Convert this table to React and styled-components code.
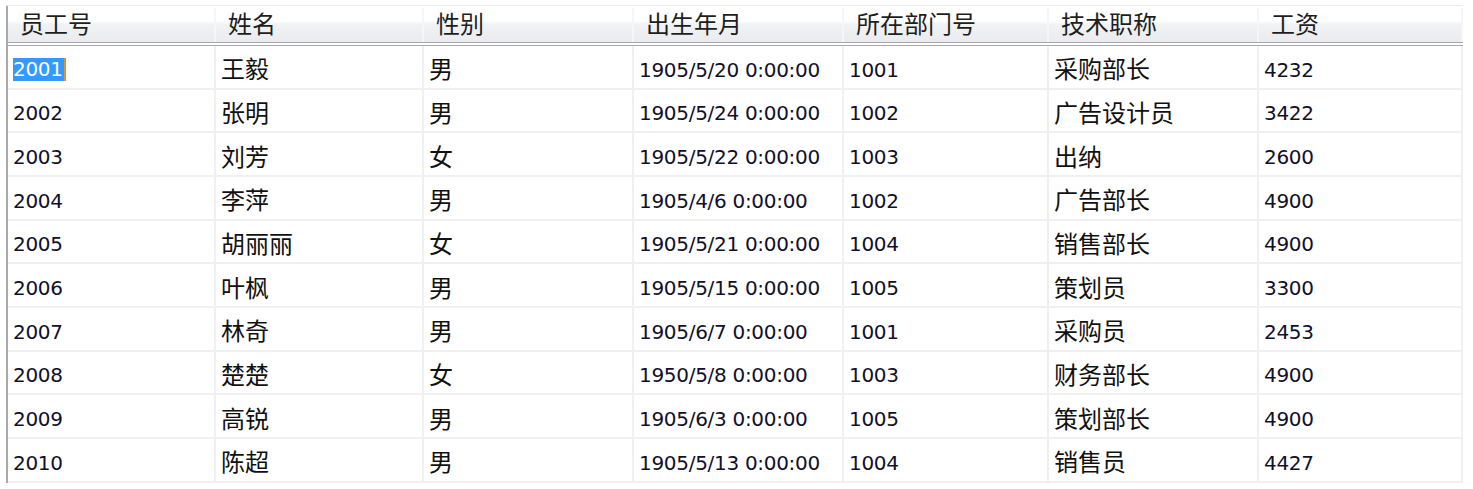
import styled, { createGlobalStyle } from "styled-components"

const GlobalStyle = createGlobalStyle`
    body {
        margin: 0;
        background: #ffffff;
    }
`

// column widths measured from the grid lines
const widths = [208, 208, 210, 210, 205, 210, 204]

const columns = ["员工号", "姓名", "性别", "出生年月", "所在部门号", "技术职称", "工资"]

const rows = [
    ["2001", "王毅", "男", "1905/5/20 0:00:00", "1001", "采购部长", "4232"],
    ["2002", "张明", "男", "1905/5/24 0:00:00", "1002", "广告设计员", "3422"],
    ["2003", "刘芳", "女", "1905/5/22 0:00:00", "1003", "出纳", "2600"],
    ["2004", "李萍", "男", "1905/4/6 0:00:00", "1002", "广告部长", "4900"],
    ["2005", "胡丽丽", "女", "1905/5/21 0:00:00", "1004", "销售部长", "4900"],
    ["2006", "叶枫", "男", "1905/5/15 0:00:00", "1005", "策划员", "3300"],
    ["2007", "林奇", "男", "1905/6/7 0:00:00", "1001", "采购员", "2453"],
    ["2008", "楚楚", "女", "1950/5/8 0:00:00", "1003", "财务部长", "4900"],
    ["2009", "高锐", "男", "1905/6/3 0:00:00", "1005", "策划部长", "4900"],
    ["2010", "陈超", "男", "1905/5/13 0:00:00", "1004", "销售员", "4427"],
]

// digits and dates use a Tahoma-like face, Chinese text a CJK face
const isCjk = (text) => /[\u4e00-\u9fff]/.test(text)

const App = () => {
    return (
        <Page>
            <GlobalStyle />
            <Grid>
                <HeaderRow>
                    {columns.map((name, i) => (
                        <HeaderCell key={name} $width={widths[i]}>{name}</HeaderCell>
                    ))}
                </HeaderRow>
                {rows.map((row, r) => (
                    <Row key={row[0]}>
                        {row.map((value, c) => (
                            <Cell key={c} $width={widths[c]} $cjk={isCjk(value)}>
                                {r === 0 && c === 0
                                    ? <Selected>{value}</Selected>
                                    : value}
                            </Cell>
                        ))}
                    </Row>
                ))}
            </Grid>
        </Page>
    )
}

const Page = styled.div`
    padding: 5px 0 0 6px;
    width: 1467px;
    height: 484px;
    overflow: hidden;
`

const Grid = styled.div`
    width: 1455px;
    border-left: 2px solid #a9a9a9;
    padding-top: 3px;
    display: flex;
    flex-direction: column;
    position: relative;

    &::before {
        content: "";
        position: absolute;
        left: -2px;
        top: 0;
        width: 1457px;
        height: 1px;
        background: #ececec;
    }
`

const HeaderRow = styled.div`
    display: flex;
    height: 38px;
    box-sizing: border-box;
    border-bottom: 4px double #a6a6a6;
    background: linear-gradient(#ffffff 0%, #ffffff 38%, #f0f2f4 48%, #e9ebee 100%);
`

const HeaderCell = styled.div`
    width: ${({ $width }) => $width}px;
    box-sizing: border-box;
    border-right: 2px solid #f6f6f6;
    padding: 0 0 4px 12px;
    display: flex;
    align-items: center;
    font-family: "Noto Sans CJK SC", sans-serif;
    font-size: 24px;
    line-height: 28px;
    color: #1e1e1e;
    white-space: nowrap;
`

const Row = styled.div`
    display: flex;
    height: 43.67px;
    box-sizing: border-box;
    border-bottom: 2px solid #f0f0f0;
`

const Cell = styled.div`
    width: ${({ $width }) => $width}px;
    box-sizing: border-box;
    border-right: 2px solid #f0f0f0;
    padding: ${({ $cjk }) => $cjk ? "3px 0 0 5px" : "6px 0 0 5px"};
    display: flex;
    align-items: center;
    font-family: ${({ $cjk }) => $cjk
        ? `"Noto Sans CJK SC", sans-serif`
        : `"DejaVu Sans", "Noto Sans", sans-serif`};
    font-size: ${({ $cjk }) => $cjk ? "24px" : "20px"};
    line-height: 28px;
    letter-spacing: ${({ $cjk }) => $cjk ? "0" : "-0.3px"};
    color: ${({ $cjk }) => $cjk ? "#111111" : "#10102a"};
    white-space: nowrap;
`

const Selected = styled.span`
    background: #3399ff;
    color: #ffffff;
    line-height: 23px;
    padding-right: 1px;
    border-right: 2px solid #f08a24;
`

export default App
